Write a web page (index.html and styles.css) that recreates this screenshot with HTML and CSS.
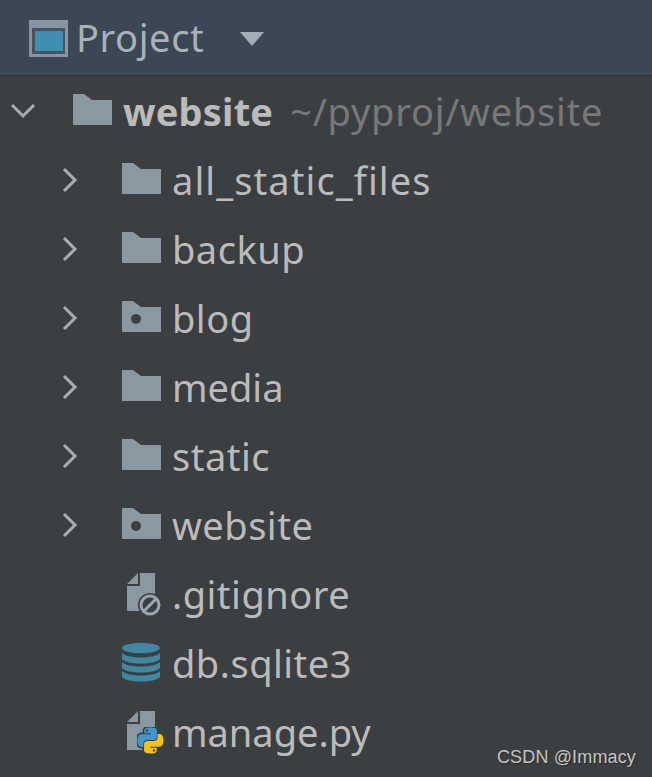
FILE: index.html
```html
<!DOCTYPE html>
<html lang="en">
<head>
  <meta charset="UTF-8">
  <title>Project</title>
  <link rel="stylesheet" href="styles.css">
</head>
<body>

  <svg class="defs" width="0" height="0">
    <symbol id="folder" viewBox="0 0 39 31">
      <path d="M0 0H11L19 6H39V31H0Z" fill="#8a98a2"/>
    </symbol>
    <symbol id="module" viewBox="0 0 39 31">
      <path d="M0 0H11L19 6H39V31H0Z" fill="#8a98a2"/>
      <circle cx="14" cy="18" r="5" fill="#3c3f41"/>
    </symbol>
    <symbol id="right" viewBox="0 0 16 26">
      <path d="M2 2L13 13L2 24" fill="none" stroke="#a9adb0" stroke-width="3"/>
    </symbol>
    <symbol id="down" viewBox="0 0 26 16">
      <path d="M2 2L13 13L24 2" fill="none" stroke="#a9adb0" stroke-width="3"/>
    </symbol>
    <symbol id="snake" viewBox="-2 -2 114 114">
      <path d="M54.9 0C26.8 0 28.6 12.2 28.6 12.2V24.8H55.4V28.6H18C18 28.6 0 26.6 0 54.9S15.7 82.2 15.7 82.2H25.1V69S24.6 53.3 40.5 53.3H67.2S82.1 53.5 82.1 38.9V14.8S84.6 0 54.9 0Z"/>
    </symbol>
  </svg>

  <div class="panel">
    <div class="header">
      <svg class="window-icon" viewBox="0 0 39 37">
        <rect width="39" height="37" fill="#8795a0"/>
        <rect x="3" y="8" width="33" height="26" fill="#48535e"/>
        <rect x="6" y="11" width="28" height="20" fill="#3f8fb3"/>
      </svg>
      <span class="title">Project</span>
      <span class="caret"></span>
    </div>

    <div class="tree">
      <div class="row root">
        <svg class="arrow-down"><use href="#down"/></svg>
        <svg class="icon"><use href="#folder"/></svg>
        <span class="label bold">website</span>
        <span class="label path">~/pyproj/website</span>
      </div>
      <div class="row">
        <svg class="arrow"><use href="#right"/></svg>
        <svg class="icon"><use href="#folder"/></svg>
        <span class="label wide">all_static_files</span>
      </div>
      <div class="row">
        <svg class="arrow"><use href="#right"/></svg>
        <svg class="icon"><use href="#folder"/></svg>
        <span class="label">backup</span>
      </div>
      <div class="row">
        <svg class="arrow"><use href="#right"/></svg>
        <svg class="icon"><use href="#module"/></svg>
        <span class="label">blog</span>
      </div>
      <div class="row">
        <svg class="arrow"><use href="#right"/></svg>
        <svg class="icon"><use href="#folder"/></svg>
        <span class="label tight">media</span>
      </div>
      <div class="row">
        <svg class="arrow"><use href="#right"/></svg>
        <svg class="icon"><use href="#folder"/></svg>
        <span class="label">static</span>
      </div>
      <div class="row">
        <svg class="arrow"><use href="#right"/></svg>
        <svg class="icon"><use href="#module"/></svg>
        <span class="label">website</span>
      </div>
      <div class="row file">
        <svg class="file-icon" viewBox="0 0 42 45">
          <path d="M5 13L16 2V13Z M18 2H33V40H5V15H18Z" fill="#8a98a2"/>
          <circle cx="28" cy="34" r="12" fill="#3c3f41"/>
          <circle cx="28" cy="34" r="9" fill="none" stroke="#9aa5ad" stroke-width="3"/>
          <path d="M22 40L34 28" stroke="#9aa5ad" stroke-width="3"/>
        </svg>
        <span class="label">.gitignore</span>
      </div>
      <div class="row file">
        <svg class="file-icon" viewBox="0 0 42 45">
          <ellipse cx="19" cy="8" rx="19" ry="5.3" fill="#3f87a3"/>
          <path d="M0 13C5 19 33 19 38 13V19C33 25 5 25 0 19Z" fill="#3f87a3"/>
          <path d="M0 22C5 28 33 28 38 22V28C33 34 5 34 0 28Z" fill="#3f87a3"/>
          <path d="M0 31C5 37 33 37 38 31V37C33 43 5 43 0 37Z" fill="#3f87a3"/>
        </svg>
        <span class="label">db.sqlite3</span>
      </div>
      <div class="row file">
        <svg class="file-icon py-icon" viewBox="0 0 42 45">
          <path d="M5 13L16 2V13Z M18 2H33V41H5V15H18Z" fill="#8a98a2"/>
          <use href="#snake" class="cut" x="15" y="18" width="27" height="27"/>
          <use href="#snake" class="cut" x="15" y="18" width="27" height="27" transform="rotate(180 28.5 31.5)"/>
          <use href="#snake" class="blue" x="15" y="18" width="27" height="27"/>
          <use href="#snake" class="yellow" x="15" y="18" width="27" height="27" transform="rotate(180 28.5 31.5)"/>
          <circle cx="25" cy="21.6" r="1.2" fill="#3c3f41"/>
          <circle cx="32" cy="41.4" r="1.2" fill="#3c3f41"/>
        </svg>
        <span class="label tight">manage.py</span>
      </div>
    </div>

    <div class="watermark">CSDN @Immacy</div>
  </div>

</body>
</html>
```

FILE: styles.css
```css
html, body {
  margin: 0;
  height: 100%;
  overflow: hidden;
}

body {
  background: #3c3f41;
  color: #bbbbbb;
  font-family: "Noto Sans", sans-serif;
}

.defs {
  position: absolute;
}

.panel {
  position: relative;
  height: 777px;
}

.header {
  display: flex;
  align-items: center;
  height: 75px;
  padding-left: 29px;
  background: #3b4754;
  border-bottom: 1px solid #303336;
}

.window-icon {
  width: 39px;
  height: 37px;
  margin: 2px 8px 0 0;
}

.title {
  font-size: 38px;
  letter-spacing: 0.6px;
  line-height: 75px;
  color: #a9b2b9;
}

.caret {
  width: 0;
  height: 0;
  margin: 2px 0 0 36px;
  border-left: 12px solid transparent;
  border-right: 12px solid transparent;
  border-top: 14px solid #a3adb5;
}

.row {
  display: flex;
  align-items: center;
  height: 69px;
  padding-left: 62px;
  font-size: 38px;
  letter-spacing: 0.5px;
  white-space: nowrap;
}

.root {
  padding-left: 10px;
}

.arrow {
  width: 16px;
  height: 26px;
  margin-right: 44px;
}

.arrow-down {
  width: 26px;
  height: 16px;
  margin-right: 37px;
}

.icon {
  width: 39px;
  height: 31px;
  margin: 0 11px 2px 0;
  flex: none;
}

.file {
  padding-left: 122px;
}

.file-icon {
  width: 42px;
  height: 45px;
  margin-right: 8px;
  flex: none;
}

.py-icon {
  overflow: visible;
}

.cut {
  fill: #3c3f41;
  stroke: #3c3f41;
  stroke-width: 14;
}

.blue {
  fill: #3f97cc;
}

.yellow {
  fill: #f2c21a;
}

.label {
  margin-top: 2px;
  line-height: 69px;
}

.wide {
  letter-spacing: 1.1px;
}

.tight {
  letter-spacing: 0;
}

.bold {
  font-weight: 700;
  letter-spacing: 0.2px;
}

.path {
  margin-left: 17px;
  letter-spacing: 0.75px;
  color: #787878;
}

.watermark {
  position: absolute;
  right: 16px;
  bottom: 9px;
  font-family: "Liberation Sans", sans-serif;
  font-size: 18px;
  letter-spacing: 0.15px;
  color: #c4c4c4;
  text-shadow: 1px 1px 1px #2a2a2a;
}
```
